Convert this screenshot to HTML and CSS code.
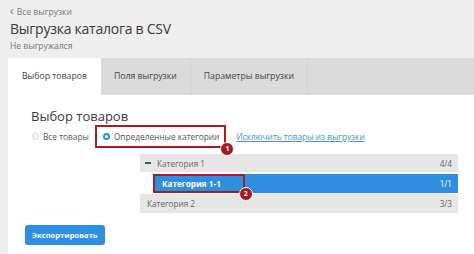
FILE: index.html
```html
<!DOCTYPE html>
<html lang="ru">
<head>
    <meta charset="UTF-8">
    <title>Выгрузка каталога в CSV</title>
    <link rel="stylesheet" href="styles.css">
</head>
<body>
    <div class="top">
        <a class="back" href="#"><span class="chev">&#8249;</span> Все выгрузки</a>
        <h1>Выгрузка каталога в CSV</h1>
        <div class="status">Не выгружался</div>
    </div>

    <div class="tabs">
        <div class="tab active">Выбор товаров</div>
        <div class="tab">Поля выгрузки</div>
        <div class="tab">Параметры выгрузки</div>
    </div>

    <div class="panel">
        <h2>Выбор товаров</h2>
        <div class="choice">
            <label class="opt"><span class="radio"></span>Все товары</label>
            <label class="opt marked"><span class="radio on"></span>Определенные категории<span class="badge">1</span></label>
            <a class="link" href="#">Исключить товары из выгрузки</a>
        </div>

        <div class="tree">
            <div class="row"><span class="name"><span class="minus"></span>Категория 1</span><span class="cnt">4/4</span></div>
            <div class="row sub sel"><span class="marked2">Категория 1-1<span class="badge">2</span></span><span class="cnt">1/1</span></div>
            <div class="row last"><span class="name">Категория 2</span><span class="cnt">3/3</span></div>
        </div>

        <button class="btn">Экспортировать</button>
    </div>
</body>
</html>
```

FILE: styles.css
```css
body {
    margin: 0;
    background: #eeeeee;
    font-family: "Open Sans", "DejaVu Sans", sans-serif;
    color: #444;
    height: 254px;
    overflow: hidden;
}

.top {
    padding: 4px 10px 0;
}

.back {
    display: block;
    font-size: 8.5px;
    color: #777;
    text-decoration: none;
    line-height: 14px;
}

.chev {
    font-size: 12px;
    margin-right: 1px;
}

h1 {
    margin: 1px 0 0;
    font-size: 14px;
    letter-spacing: -0.25px;
    font-weight: normal;
    color: #3a3a3a;
    line-height: 18px;
}

.status {
    font-size: 8.5px;
    color: #777;
    line-height: 13px;
    margin-top: 1px;
}

.tabs {
    margin: 6px 0 0 8px;
    display: flex;
    background: #dadada;
    height: 37px;
}

.tab {
    font-size: 8.7px;
    color: #444;
    line-height: 37px;
    padding: 0 13px;
    border-right: 1px solid #d0d0d0;
}

.tab.active {
    background: #fff;
    padding: 0 14px;
    border-right: none;
}

.panel {
    margin-left: 8px;
    background: #fff;
    padding: 13px 23px 0;
    height: 160px;
    box-sizing: border-box;
}

h2 {
    margin: 0;
    font-size: 13px;
    font-weight: normal;
    color: #3a3a3a;
    line-height: 17px;
}

.choice {
    display: flex;
    align-items: center;
    font-size: 8.3px;
    color: #555;
}

.opt {
    display: flex;
    align-items: center;
    position: relative;
    line-height: 15px;
}

.radio {
    width: 5px;
    height: 5px;
    border: 1px solid #cfcfcf;
    border-radius: 50%;
    margin: 0 4px 0 1px;
    background: #fff;
}

.radio.on {
    border: 2px solid #2d8fe3;
    width: 3px;
    height: 3px;
    margin-left: 0;
}

.marked {
    border: 2px solid #a71d22;
    padding: 2px 5px 2px 6px;
    margin: 0 10px 0 6px;
}

.badge {
    position: absolute;
    right: -10px;
    bottom: -10px;
    width: 12px;
    height: 12px;
    border-radius: 50%;
    background: #a01a1e;
    border: 1px solid #fff;
    color: #fff;
    font-size: 7px;
    font-weight: bold;
    line-height: 12px;
    text-align: center;
}

.link {
    color: #4a90cc;
    text-decoration: underline;
}

.tree {
    margin: 6px 0 0 109px;
    width: 318px;
    font-size: 8.2px;
}

.row {
    display: flex;
    justify-content: space-between;
    align-items: center;
    background: #e6e6e6;
    color: #666;
    height: 18px;
    padding: 0 6px 0 7px;
    margin-bottom: 2px;
}

.row.sub {
    margin-left: 13px;
    padding-left: 0;
    align-items: stretch;
}

.row.sel {
    background: #2e8fe2;
    color: #fff;
    height: 19px;
    margin-bottom: 1px;
}

.row.last {
    height: 19px;
}

.minus {
    display: inline-block;
    width: 6px;
    height: 2px;
    background: #555;
    vertical-align: middle;
    margin: 0 6px 2px -2px;
}

.marked2 {
    position: relative;
    border: 2px solid #a71d22;
    padding: 0 22px 0 7px;
    font-weight: bold;
    line-height: 15px;
}

.cnt {
    align-self: center;
}

.btn {
    display: block;
    margin: 12px 0 0 -6px;
    background: #2d8fe3;
    color: #fff;
    border: none;
    border-radius: 3px;
    font-family: inherit;
    font-size: 7.6px;
    font-weight: bold;
    padding: 0 7px;
    height: 20px;
}
```
